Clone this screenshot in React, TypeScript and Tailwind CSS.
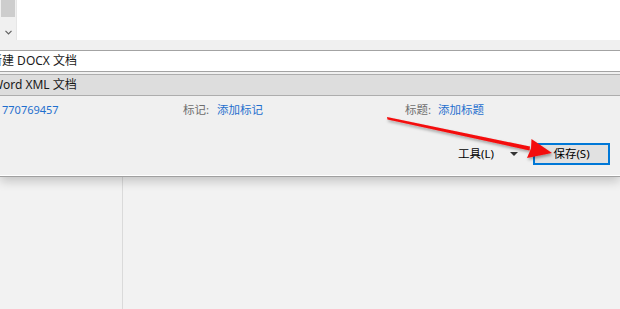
import React from 'react'

const font = { fontFamily: '"Noto Sans", "Noto Sans CJK SC", sans-serif' }

function RedArrow() {
  // annotation arrow drawn over the dialog
  return (
    <svg className="absolute left-0 top-0 z-20 pointer-events-none" width="620" height="309" viewBox="0 0 620 309">
      <defs>
        <filter id="sh" x="-20%" y="-50%" width="140%" height="200%">
          <feDropShadow dx="1" dy="2" stdDeviation="1.5" floodColor="#000" floodOpacity="0.35" />
        </filter>
      </defs>
      <g filter="url(#sh)">
        <polygon points="387,117 530,146.5 529.5,150.5 387.5,119.5" fill="#f40b0b" />
        <polygon points="552,153 527,158 531,148.5 531.5,139" fill="#f40b0b" />
      </g>
    </svg>
  )
}

export default function App() {
  return (
    <div className="relative w-[620px] h-[309px] overflow-hidden bg-[#f2f2f2] text-[11px] text-[#1a1a1a]" style={font}>
      {/* dialog */}
      <div className="relative z-10 bg-[#f0f0f0] shadow-[0_4px_10px_rgba(0,0,0,0.2)]">
        {/* file list area */}
        <div className="h-[40px] flex bg-white">
          <div className="w-[17px] bg-[#f0f0f0] border-r border-[#e6e6e6] flex flex-col items-center">
            <div className="w-[14px] h-[17px] bg-[#cdcdcd]" />
            <svg className="mt-[13px]" width="7" height="5" viewBox="0 0 7 5">
              <path d="M0.5 0.8 L3.5 3.8 L6.5 0.8" fill="none" stroke="#606060" strokeWidth="1.2" />
            </svg>
          </div>
          <div className="flex-1" />
        </div>
        <div className="h-[10px]" />

        {/* file name */}
        <div className="h-[22px] bg-white border-y border-[#a3a3a3] flex items-center">
          <span className="ml-[-10px] text-[12px]">新建 DOCX 文档</span>
        </div>
        <div className="h-[2px]" />
        {/* save type */}
        <div className="h-[22px] bg-[#dddddd] border-y border-[#adadad] flex items-center">
          <span className="ml-[-8px] text-[12px]">Word XML 文档</span>
        </div>

        {/* meta row */}
        <div className="h-[28px] flex items-center pl-[2px] text-[11.5px]">
          <span className="w-[181px] text-[11px] text-[#1f6fce]">770769457</span>
          <span className="w-[34px] text-[#6e6e6e]">标记:</span>
          <span className="w-[188px] text-[#1f6fce]">添加标记</span>
          <span className="w-[33px] text-[#6e6e6e]">标题:</span>
          <span className="text-[#1f6fce]">添加标题</span>
        </div>

        {/* buttons */}
        <div className="flex items-center justify-end pr-[10px] pt-[19px] pb-[10px]">
          <span className="text-[11.5px] text-black">工具(L)</span>
          <svg className="ml-[16px]" width="8" height="4" viewBox="0 0 8 4">
            <path d="M0 0 H8 L4 4 Z" fill="#333" />
          </svg>
          <button className="ml-[15px] w-[77px] h-[22px] bg-[#e1e1e1] border-2 border-[#0078d7] text-[11.5px] text-black flex items-center justify-center">
            保存(S)
          </button>
        </div>
        <div className="h-[2px] bg-white border-b border-[#a0a0a0]" />
      </div>

      {/* window behind */}
      <div className="flex h-[140px]">
        <div className="w-[123px] border-r border-[#dadada]" />
        <div className="flex-1" />
      </div>

      <RedArrow />
    </div>
  )
}
